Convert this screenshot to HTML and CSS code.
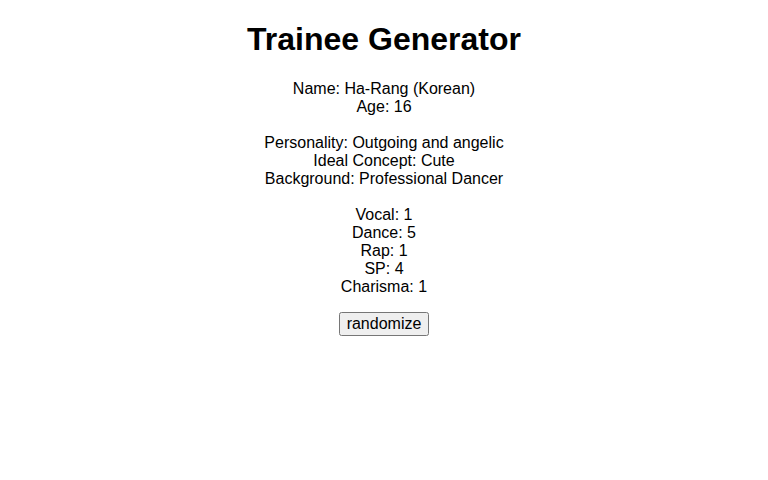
FILE: index.html
```html
<!DOCTYPE html>
<html lang="en">
<head>
<meta charset="utf-8">
<title>Trainee Generator</title>
<link rel="stylesheet" href="styles.css">
</head>
<body>
<main class="generator">
  <h1 class="title">Trainee Generator</h1>
  <p class="profile">
    Name: Ha-Rang (Korean)<br>
    Age: 16<br>
    <br>
    Personality: Outgoing and angelic<br>
    Ideal Concept: Cute<br>
    Background: Professional Dancer<br>
    <br>
    Vocal: 1<br>
    Dance: 5<br>
    Rap: 1<br>
    SP: 4<br>
    Charisma: 1
  </p>
  <button class="randomize" type="button">randomize</button>
</main>
</body>
</html>
```

FILE: styles.css
```css
body {
  margin: 0;
  background: #fff;
  color: #000;
  font-family: "Liberation Sans", Arial, sans-serif;
}

.generator {
  display: flex;
  flex-direction: column;
  align-items: center;
  text-align: center;
  padding-top: 21px;
}

.title {
  margin: 0 0 22px;
  font-size: 32px;
  font-weight: bold;
}

.profile {
  margin: 0 0 16px;
  font-size: 16px;
}

.randomize {
  font-family: "Liberation Sans", Arial, sans-serif;
  font-size: 16px;
}
```
